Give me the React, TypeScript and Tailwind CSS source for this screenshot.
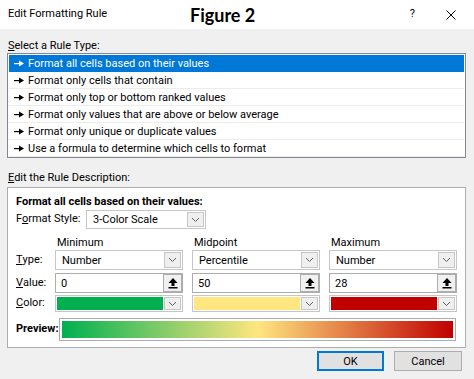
import React from 'react';

const font = { fontFamily: 'Roboto, "Noto Sans", sans-serif' };

function RuleArrow({ white }: { white?: boolean }) {
  const c = white ? '#ffffff' : '#000000';
  return (
    <svg width="10" height="7" viewBox="0 0 10 7" className="shrink-0">
      <rect x="0" y="3" width="6" height="1.2" fill={c} />
      <polygon points="5,0.5 10,3.6 5,6.5" fill={c} />
    </svg>
  );
}

function Chevron() {
  return (
    <div className="w-[17px] h-full border border-[#c7c7c7] bg-[#efefef] flex items-center justify-center shrink-0">
      <svg width="9" height="6" viewBox="0 0 9 6">
        <polyline points="1,1 4.5,4.5 8,1" fill="none" stroke="#606060" strokeWidth="1" />
      </svg>
    </div>
  );
}

function UpButton() {
  return (
    <div className="w-[19px] h-full border border-[#adadad] bg-[#f0f0f0] flex items-center justify-center shrink-0">
      <svg width="10" height="11" viewBox="0 0 10 11">
        <polygon points="5,0 9.5,5 6.5,5 6.5,8 3.5,8 3.5,5 0.5,5" fill="#000" />
        <rect x="0.5" y="9" width="9" height="1.5" fill="#000" />
      </svg>
    </div>
  );
}

function Select({ value, className }: { value: string; className?: string }) {
  return (
    <div className={`flex items-stretch border border-[#c6c6c6] bg-white p-px ${className ?? ''}`}>
      <div className="flex-1 flex items-center pl-[5px] leading-none">{value}</div>
      <Chevron />
    </div>
  );
}

function ValueInput({ value }: { value: string }) {
  return (
    <div className="flex items-stretch h-[20px] border border-[#adadad] bg-white">
      <div className="flex-1 flex items-center pl-[5px] leading-none">{value}</div>
      <UpButton />
    </div>
  );
}

function ColorPick({ color }: { color: string }) {
  return (
    <div className="flex items-stretch h-[17px] border border-[#c6c6c6] bg-white p-px gap-px">
      <div className="flex-1" style={{ background: color }} />
      <Chevron />
    </div>
  );
}

const rules = [
  'Format all cells based on their values',
  'Format only cells that contain',
  'Format only top or bottom ranked values',
  'Format only values that are above or below average',
  'Format only unique or duplicate values',
  'Use a formula to determine which cells to format',
];

export default function App() {
  return (
    <div className="w-[474px] h-[379px] bg-[#f0f0f0] overflow-hidden text-black text-[11px]" style={font}>
      <div className="h-[29px] bg-white flex items-center pl-[8px]">
        <span className="w-[182px] whitespace-nowrap">Edit Formatting Rule</span>
        <span className="text-[18px] font-bold leading-none" style={{ fontFamily: 'Lato, "Open Sans", sans-serif' }}>
          Figure 2
        </span>
        <span className="ml-auto mr-[31px]">?</span>
        <svg width="10" height="10" viewBox="0 0 10 10" className="mr-[18px]">
          <path d="M0.5 0.5 L9.5 9.5 M9.5 0.5 L0.5 9.5" stroke="#000" strokeWidth="1" />
        </svg>
      </div>

      <div className="pl-[7px] pr-[8px]">
        <div className="pt-[9px] pl-px leading-[15px]">
          <span className="underline">S</span>elect a Rule Type:
        </div>
        <div className="h-[105px] border border-[#828790] bg-white p-px">
          {rules.map((r, i) => (
            <div
              key={r}
              className={`h-[17px] flex items-center gap-[4px] pl-[5px] leading-none border-b ${
                i === 0 ? 'bg-[#0078d7] text-white border-[#0078d7]' : 'border-[#ececec]'
              }`}
            >
              <RuleArrow white={i === 0} />
              <span className="whitespace-nowrap">{r}</span>
            </div>
          ))}
        </div>

        <div className="pt-[12px] pl-px leading-[15px]">
          <span className="underline">E</span>dit the Rule Description:
        </div>
        <div className="mt-[2px] h-[161px] border border-[#adadad] bg-white pl-[8px] pr-[9px] pt-[6px]">
          <div className="font-bold leading-[15px]">Format all cells based on their values:</div>
          <div className="flex items-center mt-[1px]">
            <span className="w-[70px] whitespace-nowrap">
              F<span className="underline">o</span>rmat Style:
            </span>
            <Select value="3-Color Scale" className="w-[120px] h-[19px]" />
          </div>

          <div className="grid grid-cols-[30px_128px_128px_128px] gap-x-[9px] mt-[6px]">
            <div />
            <div className="pl-[2px] leading-[15px]">Minimum</div>
            <div className="pl-[2px] leading-[15px]">Midpoint</div>
            <div className="pl-[2px] leading-[15px]">Maximum</div>

            <div className="flex items-center">
              <span className="underline">T</span>ype:
            </div>
            <Select value="Number" className="h-[20px]" />
            <Select value="Percentile" className="h-[20px]" />
            <Select value="Number" className="h-[20px]" />

            <div className="flex items-center mt-[3px]">
              <span className="underline">V</span>alue:
            </div>
            <div className="mt-[3px]"><ValueInput value="0" /></div>
            <div className="mt-[3px]"><ValueInput value="50" /></div>
            <div className="mt-[3px]"><ValueInput value="28" /></div>

            <div className="flex items-center mt-[2px] h-[17px]">
              <span className="underline">C</span>olor:
            </div>
            <div className="mt-[2px]"><ColorPick color="#00b050" /></div>
            <div className="mt-[2px]"><ColorPick color="#ffe680" /></div>
            <div className="mt-[2px]"><ColorPick color="#c00000" /></div>
          </div>

          <div className="flex items-center mt-[6px]">
            <span className="w-[43px] font-bold whitespace-nowrap">Preview:</span>
            <div className="flex-1 h-[23px] border border-[#adadad] p-[2px] bg-white">
              <div className="h-full bg-[linear-gradient(to_right,#00b050,#ffe680_50%,#c00000)]" />
            </div>
          </div>
        </div>

        <div className="flex justify-end gap-[10px] mt-[3px] pr-[4px]">
          <button className="w-[67px] h-[20px] border-2 border-[#0078d7] bg-[#e1e1e1] leading-none">
            OK
          </button>
          <button className="w-[68px] h-[20px] border border-[#adadad] bg-[#e1e1e1] leading-none">
            Cancel
          </button>
        </div>
      </div>
    </div>
  );
}
